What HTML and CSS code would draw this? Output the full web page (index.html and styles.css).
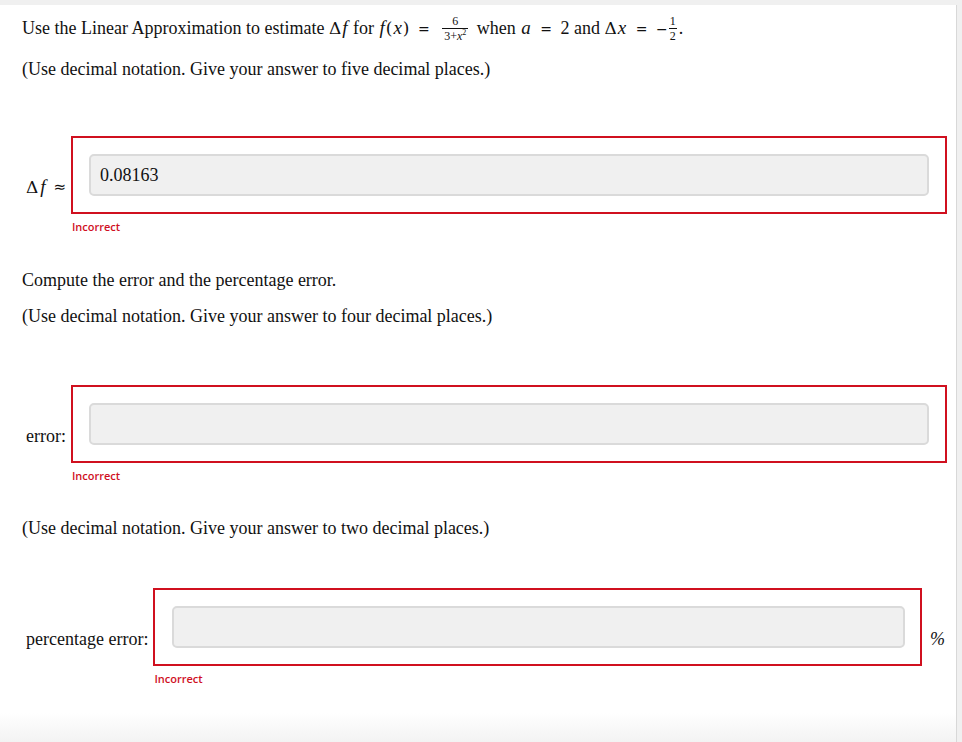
FILE: index.html
```html
<!DOCTYPE html>
<html>
<head>
<meta charset="utf-8">
<link rel="stylesheet" href="styles.css">
</head>
<body>
<div class="card">
  <p class="q">Use the Linear Approximation to estimate <span class="m">Δ<i>f</i></span> for <span class="m"><i>f</i>(<i>x</i>)</span> <span class="eq">=</span> <span class="frac"><span class="num">6</span><span class="den">3+<i>x</i><sup>2</sup></span></span> when <span class="m"><i>a</i></span> <span class="eq">=</span> 2 and <span class="m">Δ<i>x</i></span> <span class="eq">=</span> <span class="minus">−</span><span class="frac half"><span class="num">1</span><span class="den">2</span></span>.</p>
  <p class="note n1">(Use decimal notation. Give your answer to five decimal places.)</p>

  <div class="row r1">
    <span class="label">Δ<i>f</i> <span class="approx">≈</span></span>
    <div class="answer">
      <div class="box"><input class="field" type="text" value="0.08163" readonly></div>
      <div class="status">Incorrect</div>
    </div>
  </div>

  <p class="note n2">Compute the error and the percentage error.</p>
  <p class="note n3">(Use decimal notation. Give your answer to four decimal places.)</p>

  <div class="row r2">
    <span class="label">error:</span>
    <div class="answer">
      <div class="box"><input class="field" type="text" value="" readonly></div>
      <div class="status">Incorrect</div>
    </div>
  </div>

  <p class="note n4">(Use decimal notation. Give your answer to two decimal places.)</p>

  <div class="row r3">
    <span class="label">percentage error:</span>
    <div class="answer">
      <div class="box b3"><input class="field" type="text" value="" readonly></div>
      <div class="status">Incorrect</div>
    </div>
    <span class="suffix">%</span>
  </div>
</div>
</body>
</html>
```
FILE: styles.css
```css
html, body {
  margin: 0;
  padding: 0;
  height: 100%;
}
body {
  background: #f0f0f0;
  font-family: "Liberation Serif", "Times New Roman", serif;
  font-size: 18px;
  color: #111;
  overflow: hidden;
}
.card {
  margin-top: 5px;
  width: 957px;
  height: 737px;
  box-sizing: border-box;
  background: linear-gradient(to bottom, #ffffff 0%, #ffffff 96%, #f3f3f3 100%);
  border-right: 1px solid #d8d8d8;
  padding: 13px 0 0 22px;
}
p {
  margin: 0;
  line-height: 20px;
  white-space: nowrap;
}
i {
  font-style: italic;
}
.m {
  font-family: "DejaVu Serif", "Liberation Serif", serif;
  font-size: 17px;
}
.m i {
  font-family: "Liberation Serif", serif;
  font-size: 19px;
  margin: 0 1px;
}
.eq {
  font-family: "DejaVu Sans", sans-serif;
  font-size: 14px;
  margin: 0 4px;
}
.minus {
  font-family: "DejaVu Sans", sans-serif;
  font-size: 14px;
}
.frac {
  display: inline-flex;
  flex-direction: column;
  align-items: center;
  vertical-align: 9px;
  font-size: 12px;
  line-height: 12px;
  margin: -8px 4px;
}
.frac .num {
  padding: 0 2px 1px;
}
.frac .den {
  border-top: 1px solid #111;
  padding: 1px 2px 0;
  align-self: stretch;
  text-align: center;
}
.frac sup {
  font-size: 8px;
  vertical-align: 5px;
  line-height: 0;
}
.frac i {
  font-size: 12px;
}
.frac.half {
  margin: -8px 2px -8px 1px;
}
.frac.half .num, .frac.half .den {
  padding-left: 1px;
  padding-right: 1px;
}
.n1 { margin-top: 20px; }
.n2 { margin-top: 36px; }
.n3 { margin-top: 16px; }
.n4 { margin-top: 35px; }

.row {
  display: flex;
  align-items: flex-start;
  padding-left: 4px;
  width: 921px;
}
.r1 { margin-top: 57px; }
.r2 { margin-top: 59px; }
.r3 { margin-top: 50px; }

.label {
  width: 45px;
  flex: none;
  height: 78px;
  display: flex;
  align-items: flex-end;
  padding-bottom: 17px;
  box-sizing: border-box;
  line-height: 20px;
  white-space: nowrap;
}
.r1 .label {
  font-family: "DejaVu Serif", "Liberation Serif", serif;
  font-size: 17px;
}
.r1 .label i {
  font-family: "Liberation Serif", serif;
  font-size: 19px;
  margin-left: 2px;
}
.approx {
  font-family: "DejaVu Sans", sans-serif;
  font-size: 15px;
  margin-left: 8px;
}
.r3 .label {
  width: auto;
  margin-right: 5px;
}
.answer {
  flex: 1;
  min-width: 0;
}
.box {
  border: 2px solid #d0101f;
  height: 78px;
  box-sizing: border-box;
  padding: 16px;
}
.b3 {
  padding: 16px 15px 16px 17px;
}
.field {
  display: block;
  width: 100%;
  height: 42px;
  box-sizing: border-box;
  margin: 0;
  border: 2px solid #dadada;
  border-radius: 5px;
  background: #f0f0f0;
  padding: 0 0 0 9px;
  font-family: "Liberation Serif", "Times New Roman", serif;
  font-size: 18px;
  color: #111;
  outline: none;
}
.status {
  margin-top: 6px;
  padding-left: 1px;
  font-family: "Open Sans", "Noto Sans", sans-serif;
  font-weight: 600;
  font-size: 11px;
  line-height: 14px;
  color: #d0101f;
}
.suffix {
  flex: none;
  width: 25px;
  padding-left: 8px;
  box-sizing: border-box;
  height: 78px;
  display: flex;
  align-items: flex-end;
  padding-bottom: 17px;
  font-style: italic;
  font-size: 18px;
  line-height: 20px;
}
```
